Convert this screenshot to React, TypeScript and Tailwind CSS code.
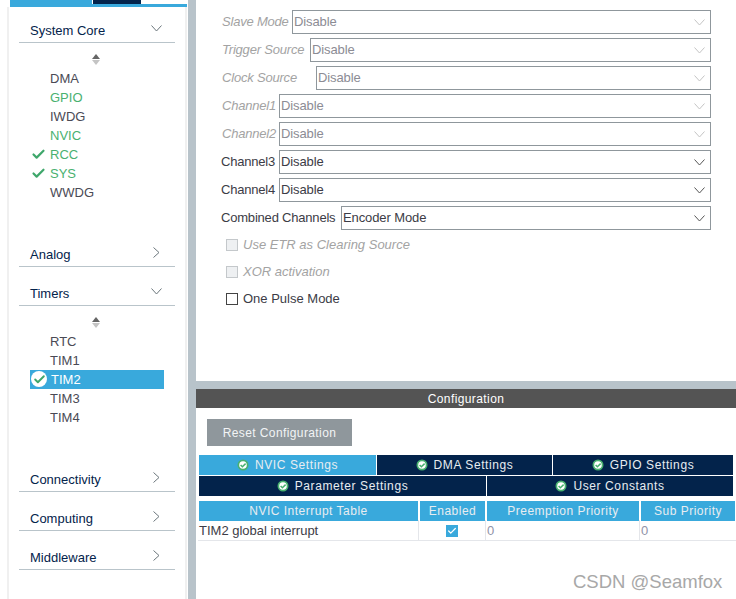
import { Check } from "lucide-react";

const font = { fontFamily: '"Liberation Sans", Arial, sans-serif' };

function DownChevron({ className }: { className?: string }) {
  return (
    <svg width="11" height="7" viewBox="0 0 11 7" fill="none" className={className}>
      <path d="M0.5 0.5 L5.5 6 L10.5 0.5" stroke="currentColor" strokeWidth="1" />
    </svg>
  );
}

function RightChevron({ className }: { className?: string }) {
  return (
    <svg width="7" height="11" viewBox="0 0 7 11" fill="none" className={className}>
      <path d="M0.5 0.5 L6 5.5 L0.5 10.5" stroke="currentColor" strokeWidth="1" />
    </svg>
  );
}

function SectionHeader({ label, open, short }: { label: string; open?: boolean; short?: boolean }) {
  return (
    <div className={`ml-[10px] mr-[10px] flex items-end justify-between border-b-[1px] border-[#b9c4ca] pb-[1px] pl-[11px] pr-[13px] ${short ? "h-[36px]" : "h-[39px]"}`}>
      <span className="text-[13px] leading-[20px] text-[#03234b]">{label}</span>
      {open ? (
        <DownChevron className="mb-[9px] text-[#6b767c]" />
      ) : (
        <RightChevron className="mb-[7px] mr-[2px] text-[#6b767c]" />
      )}
    </div>
  );
}

function Scroller() {
  return (
    <div className="absolute left-[62px] top-[11px] flex flex-col items-center gap-[1px]">
      <span className="h-0 w-0 border-x-[4px] border-b-[5px] border-x-transparent border-b-[#666666]" />
      <span className="h-0 w-0 border-x-[4px] border-t-[5px] border-x-transparent border-t-[#c4c4c4]" />
    </div>
  );
}

function ListItem({ label, green, check, selected }: { label: string; green?: boolean; check?: boolean; selected?: boolean }) {
  return (
    <div className={`relative flex h-[19px] items-center pl-[20px] text-[13px] leading-[19px] ${selected ? "bg-[#39a9dc] text-[#ffffff]" : green ? "text-[#49b170]" : "text-[#4a4a55]"}`}>
      {check && !selected && <Check size={15} strokeWidth={3.5} className="absolute left-[1px] top-[2px] text-[#3fa76b]" />}
      {selected && (
        <span className="absolute left-[1px] top-[1px] flex h-[16px] w-[16px] items-center justify-center rounded-full bg-white">
          <Check size={13} strokeWidth={3.5} className="text-[#3fa76b]" />
        </span>
      )}
      <span className={selected ? "ml-[1px]" : ""}>{label}</span>
    </div>
  );
}

function ItemList({ children }: { children: React.ReactNode }) {
  return (
    <div className="relative ml-[21px] w-[134px] pb-[26px] pt-[26px]">
      <Scroller />
      {children}
    </div>
  );
}

function Sidebar() {
  return (
    <div className="flex w-[196px] shrink-0 bg-[#b8c3ca]">
      <div className="flex w-[188px] flex-col bg-white">
        <div className="flex h-[4px] pl-[10px]">
          <div className="w-[82px] bg-[#39a9dc]" />
          <div className="ml-[1px] w-[48px] bg-[#03234b]" />
        </div>
        <div className="ml-[10px] h-[3px] w-[177px] bg-[#39a9dc]" />
        <div className="ml-[7px] mr-[1px] flex-1 border-x-[2px] border-[#f0f0f0]">
          <SectionHeader label="System Core" open short />
          <ItemList>
            <ListItem label="DMA" />
            <ListItem label="GPIO" green />
            <ListItem label="IWDG" />
            <ListItem label="NVIC" green />
            <ListItem label="RCC" green check />
            <ListItem label="SYS" green check />
            <ListItem label="WWDG" />
          </ItemList>
          <SectionHeader label="Analog" />
          <SectionHeader label="Timers" open />
          <ItemList>
            <ListItem label="RTC" />
            <ListItem label="TIM1" />
            <ListItem label="TIM2" selected />
            <ListItem label="TIM3" />
            <ListItem label="TIM4" />
          </ItemList>
          <SectionHeader label="Connectivity" />
          <SectionHeader label="Computing" />
          <SectionHeader label="Middleware" />
        </div>
      </div>
    </div>
  );
}

function SelectRow({ label, labelWidth, value, disabled }: { label: string; labelWidth: string; value: string; disabled?: boolean }) {
  return (
    <div className="flex h-[24px] items-center">
      <span className={`${labelWidth} shrink-0 whitespace-nowrap text-[13px] tracking-[-0.2px] ${disabled ? "italic text-[#a3a3a3]" : "text-[#3c3c46]"}`}>{label}</span>
      <div className="flex h-[24px] flex-1 items-center justify-between border-[1px] border-[#8f979c] pl-[1px] pr-[5px]">
        <span className={`text-[13px] tracking-[-0.1px] ${disabled ? "text-[#8c8c94]" : "text-[#3c3c46]"}`}>{value}</span>
        <DownChevron className={disabled ? "text-[#c4c4c4]" : "text-[#555555]"} />
      </div>
    </div>
  );
}

function CheckRow({ label, disabled }: { label: string; disabled?: boolean }) {
  return (
    <div className="flex h-[27px] items-center pl-[5px]">
      <span className={`h-[12px] w-[12px] border-[1px] ${disabled ? "border-[#c4c8cb] bg-[#eef0f2]" : "border-[#444444] bg-white"}`} />
      <span className={`ml-[5px] text-[13px] ${disabled ? "italic text-[#a3a3a3]" : "text-[#3c3c46]"}`}>{label}</span>
    </div>
  );
}

function TabIcon() {
  return (
    <svg width="12" height="12" viewBox="0 0 12 12" className="shrink-0">
      <circle cx="6" cy="6" r="5.5" fill="#49b170" />
      <circle cx="6" cy="6" r="3.8" fill="#ffffff" />
      <path d="M3.6 6 L5.4 7.8 L8.6 4.6" fill="none" stroke="#49b170" strokeWidth="1.5" />
    </svg>
  );
}

function Tab({ label, width, active }: { label: string; width: string; active?: boolean }) {
  return (
    <div className={`${width} flex h-full items-center justify-center gap-[6px] text-[12px] tracking-[0.6px] text-[#e8edf1] ${active ? "bg-[#39a9dc]" : "bg-[#03234b]"}`}>
      <TabIcon />
      <span>{label}</span>
    </div>
  );
}

export default function App() {
  return (
    <div className="relative flex h-[599px] w-[736px] overflow-hidden bg-white" style={font}>
      <Sidebar />
      <div className="flex min-w-0 flex-1 flex-col">
        <div className="h-[381px] shrink-0 pl-[25px] pr-[25px] pt-[10px]">
          <div className="flex flex-col gap-[4px]">
            <SelectRow label="Slave Mode" labelWidth="w-[71px] pl-[1px]" value="Disable" disabled />
            <SelectRow label="Trigger Source" labelWidth="w-[89px] pl-[1px]" value="Disable" disabled />
            <SelectRow label="Clock Source" labelWidth="w-[95px] pl-[1px]" value="Disable" disabled />
            <SelectRow label="Channel1" labelWidth="w-[58px] pl-[1px]" value="Disable" disabled />
            <SelectRow label="Channel2" labelWidth="w-[58px] pl-[1px]" value="Disable" disabled />
            <SelectRow label="Channel3" labelWidth="w-[58px]" value="Disable" />
            <SelectRow label="Channel4" labelWidth="w-[58px]" value="Disable" />
            <SelectRow label="Combined Channels" labelWidth="w-[120px]" value="Encoder Mode" />
          </div>
          <div className="mt-[1px]">
            <CheckRow label="Use ETR as Clearing Source" disabled />
            <CheckRow label="XOR activation" disabled />
            <CheckRow label="One Pulse Mode" />
          </div>
        </div>
        <div className="h-[8px] shrink-0 bg-[#b8c3ca]" />
        <div className="flex h-[19px] shrink-0 items-center justify-center bg-[#545454] text-[12px] tracking-[0.4px] text-white">Configuration</div>
        <div className="pl-[11px] pt-[11px]">
          <button className="h-[27px] w-[145px] bg-[#8f979c] text-[12px] tracking-[0.4px] text-[#f2f4f5]">Reset Configuration</button>
        </div>
        <div className="mt-[9px] flex h-[20px] gap-[1px] pl-[3px]">
          <Tab label="NVIC Settings" width="w-[177px]" active />
          <Tab label="DMA Settings" width="w-[175px]" />
          <Tab label="GPIO Settings" width="w-[180px]" />
        </div>
        <div className="mt-[1px] flex h-[20px] gap-[1px] pl-[3px]">
          <Tab label="Parameter Settings" width="w-[287px]" />
          <Tab label="User Constants" width="w-[246px]" />
        </div>
        <div className="mt-[5px] grid h-[19px] grid-cols-[219px_65px_152px_94px] gap-x-[2px] pl-[3px] text-center text-[12px] leading-[20px] tracking-[0.5px] text-[#e8edf1]">
          <div className="bg-[#39a9dc]">NVIC Interrupt Table</div>
          <div className="bg-[#39a9dc]">Enabled</div>
          <div className="bg-[#39a9dc]">Preemption Priority</div>
          <div className="bg-[#39a9dc]">Sub Priority</div>
        </div>
        <div className="ml-[2px] grid h-[21px] grid-cols-[220px_67px_154px_95px] border-b-[1px] border-[#e4e6ea] pl-[1px] text-[13px] leading-[21px] text-[#3c3c46]">
          <div className="whitespace-nowrap border-r-[1px] border-[#e4e6ea]">TIM2 global interrupt</div>
          <div className="flex items-center justify-center border-r-[1px] border-[#e4e6ea]">
            <span className="flex h-[12px] w-[12px] items-center justify-center bg-[#39a9dc]">
              <Check size={10} strokeWidth={3} className="text-white" />
            </span>
          </div>
          <div className="border-r-[1px] border-[#e4e6ea] pl-[1px] text-[#8f93a8]">0</div>
          <div className="pl-[1px] text-[#8f93a8]">0</div>
        </div>
      </div>
      <span className="absolute left-[573px] top-[571px] text-[18.5px] leading-[22px] text-[#a8a8a8]">CSDN @Seamfox</span>
    </div>
  );
}
